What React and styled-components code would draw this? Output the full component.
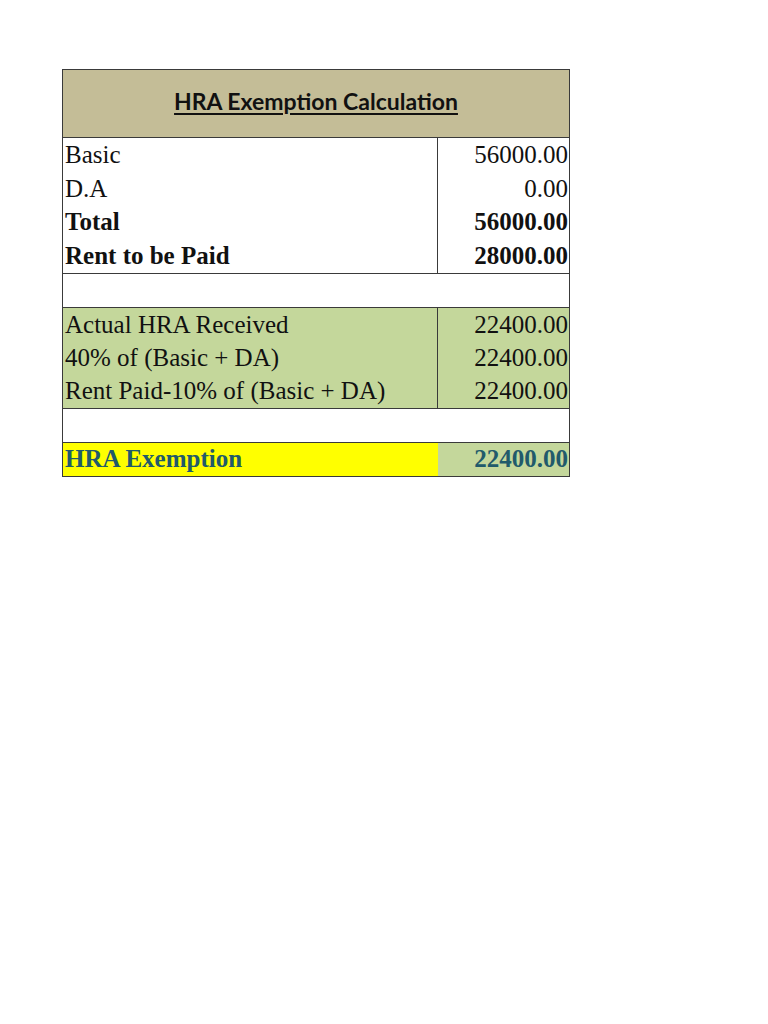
import React from 'react';
import styled, { createGlobalStyle } from 'styled-components';

const GlobalStyle = createGlobalStyle`
  body {
    margin: 0;
    background: #ffffff;
  }
`;

const Page = styled.div`
  padding: 69px 0 0 62px;
`;

const Sheet = styled.div`
  width: 506px;
  border: 1px solid #3a3a3a;
  font-family: 'Liberation Serif', 'Times New Roman', serif;
  font-size: 25px;
  color: #111;
`;

const Header = styled.div`
  display: flex;
  align-items: center;
  justify-content: center;
  box-sizing: border-box;
  height: 68px;
  padding-bottom: 5px;
  background: #c4bd97;
  border-bottom: 1px solid #3a3a3a;
  font-family: Lato, 'Open Sans', sans-serif;
  font-weight: 700;
  font-size: 23px;
  text-decoration: underline;
  text-decoration-thickness: 2px;
  text-underline-offset: 3px;
  color: #111;
`;

const Block = styled.div`
  display: grid;
  grid-template-columns: 375px 1fr;
  grid-auto-rows: ${(p) => p.rowHeight}px;
  background: ${(p) => p.bg || '#fff'};
  border-bottom: ${(p) => (p.last ? 'none' : '1px solid #3a3a3a')};
`;

const Label = styled.div`
  display: flex;
  align-items: center;
  padding-left: 2px;
  border-right: ${(p) => (p.noDivider ? 'none' : '1px solid #3a3a3a')};
  font-weight: ${(p) => (p.bold ? 700 : 400)};
  background: ${(p) => p.bg || 'transparent'};
  color: ${(p) => p.color || 'inherit'};
  white-space: nowrap;
`;

const Value = styled.div`
  display: flex;
  align-items: center;
  justify-content: flex-end;
  padding-right: 1px;
  font-weight: ${(p) => (p.bold ? 700 : 400)};
  background: ${(p) => p.bg || 'transparent'};
  color: ${(p) => p.color || 'inherit'};
`;

const Empty = styled.div`
  height: 33px;
  border-bottom: 1px solid #3a3a3a;
  background: #fff;
`;

const topRows = [
  { label: 'Basic', value: '56000.00' },
  { label: 'D.A', value: '0.00' },
  { label: 'Total', value: '56000.00', bold: true },
  { label: 'Rent to be Paid', value: '28000.00', bold: true },
];

const hraRows = [
  { label: 'Actual HRA Received', value: '22400.00' },
  { label: '40% of (Basic + DA)', value: '22400.00' },
  { label: 'Rent Paid-10% of (Basic + DA)', value: '22400.00' },
];

const App = () => (
  <Page>
    <GlobalStyle />
    <Sheet>
      <Header>HRA Exemption Calculation</Header>
      <Block rowHeight={33.75}>
        {topRows.map((r) => (
          <React.Fragment key={r.label}>
            <Label bold={r.bold}>{r.label}</Label>
            <Value bold={r.bold}>{r.value}</Value>
          </React.Fragment>
        ))}
      </Block>
      <Empty />
      <Block rowHeight={33.34} bg="#c4d79b">
        {hraRows.map((r) => (
          <React.Fragment key={r.label}>
            <Label>{r.label}</Label>
            <Value>{r.value}</Value>
          </React.Fragment>
        ))}
      </Block>
      <Empty />
      <Block rowHeight={33} last>
        <Label bold noDivider bg="#ffff00" color="#215a6b">
          HRA Exemption
        </Label>
        <Value bold bg="#c4d79b" color="#215a6b">
          22400.00
        </Value>
      </Block>
    </Sheet>
  </Page>
);

export default App;
